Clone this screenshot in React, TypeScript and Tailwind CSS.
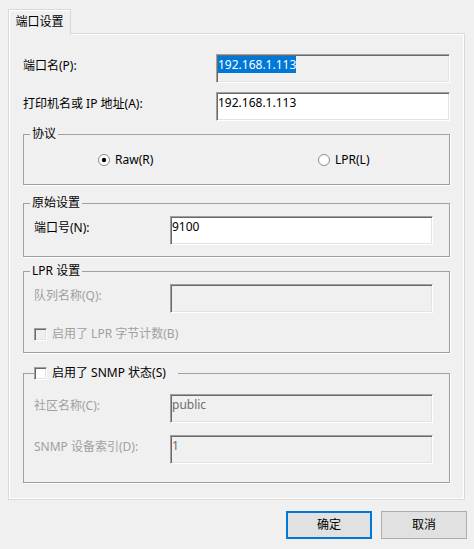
import type { ReactNode } from 'react';

const sunken =
  'border border-t-[#a0a0a0] border-l-[#a0a0a0] border-b-white border-r-white shadow-[inset_1px_1px_0_#696969,inset_-1px_-1px_0_#e3e3e3]';

function Field({ children, className = '' }: { children?: ReactNode; className?: string }) {
  return <div className={`${sunken} h-[29px] pl-[1px] pt-[2px] leading-[16px] ${className}`}>{children}</div>;
}

function Check({ disabled }: { disabled?: boolean }) {
  return <span className={`${sunken} block h-[13px] w-[13px] shrink-0 ${disabled ? 'bg-[#f0f0f0]' : 'bg-white'}`} />;
}

function Radio({ checked, label }: { checked?: boolean; label: string }) {
  return (
    <div className="flex items-center gap-[5px]">
      <svg width="12" height="12" viewBox="0 0 12 12">
        <circle cx="6" cy="6" r="5.5" fill="#fff" stroke="#8a8a8a" />
        {checked && <circle cx="6" cy="6" r="2.2" fill="#000" />}
      </svg>
      <span className="leading-[16px]">{label}</span>
    </div>
  );
}

function Group({ title, className = '', children }: { title: ReactNode; className?: string; children: ReactNode }) {
  return (
    <fieldset className={`w-[427px] border border-[#a0a0a0] shadow-[1px_1px_0_#fff] ${className}`}>
      {title}
      {children}
    </fieldset>
  );
}

function Legend({ text }: { text: string }) {
  return <legend className="ml-[6px] px-[2px] leading-[16px]">{text}</legend>;
}

export default function App() {
  return (
    <div
      className="h-[549px] w-[474px] bg-[#f0f0f0] px-[8px] pt-[9px] text-[12px] text-black"
      style={{ fontFamily: '"Noto Sans", "Noto Sans CJK SC", sans-serif' }}
    >
      <div className="relative z-10 -mb-[2px] flex h-[26px] w-[63px] items-center justify-center border border-b-0 border-[#d9d9d9] bg-[#f0f0f0] pb-[2px] shadow-[inset_1px_1px_0_#fff]">
        端口设置
      </div>

      <div className="flex h-[467px] w-[457px] flex-col border border-[#d9d9d9] px-[14px] pt-[20px] shadow-[inset_1px_1px_0_#fff,inset_-1px_-1px_0_#fff]">
        <div className="flex">
          <span className="w-[193px] pt-[4px] leading-[16px]">端口名(P):</span>
          <Field className="w-[234px] bg-[#f0f0f0]">
            <span className="bg-[#0078d7] text-white">192.168.1.113</span>
          </Field>
        </div>
        <div className="mt-[9px] flex">
          <span className="w-[193px] pt-[4px] leading-[16px]">打印机名或 IP 地址(A):</span>
          <Field className="w-[234px] bg-white">192.168.1.113</Field>
        </div>

        <Group className="mt-[5px] pb-[16px] pt-[10px]" title={<Legend text="协议" />}>
          <div className="flex pl-[74px]">
            <div className="w-[220px]">
              <Radio checked label="Raw(R)" />
            </div>
            <Radio label="LPR(L)" />
          </div>
        </Group>

        <Group className="mt-[10px] pb-[11px] pt-[5px]" title={<Legend text="原始设置" />}>
          <div className="flex pl-[10px]">
            <span className="w-[136px] pt-[4px] leading-[16px]">端口号(N):</span>
            <Field className="w-[263px] bg-white">9100</Field>
          </div>
        </Group>

        <Group className="mt-[6px] pb-[10px] pt-[5px]" title={<Legend text="LPR 设置" />}>
          <div className="flex pl-[10px] text-[#a0a0a0]">
            <span className="w-[136px] pt-[4px] leading-[16px]">队列名称(Q):</span>
            <Field className="w-[263px] bg-[#f0f0f0]" />
          </div>
          <div className="mt-[13px] flex h-[16px] items-center gap-[5px] pl-[10px] text-[#a0a0a0]">
            <Check disabled />
            <span className="leading-[16px]">启用了 LPR 字节计数(B)</span>
          </div>
        </Group>

        <Group
          className="mt-[12px] pb-[18px] pt-[13px]"
          title={
            <legend className="ml-[10px] pr-[12px] leading-[16px]">
              <span className="flex items-center gap-[5px]">
                <Check />
                <span>启用了 SNMP 状态(S)</span>
              </span>
            </legend>
          }
        >
          <div className="flex pl-[10px] text-[#a0a0a0]">
            <span className="w-[136px] pt-[4px] leading-[16px]">社区名称(C):</span>
            <Field className="w-[263px] bg-[#f0f0f0] text-[#6d6d6d]">public</Field>
          </div>
          <div className="mt-[12px] flex pl-[10px] text-[#a0a0a0]">
            <span className="w-[136px] pt-[4px] leading-[16px]">SNMP 设备索引(D):</span>
            <Field className="w-[263px] bg-[#f0f0f0] text-[#6d6d6d]">1</Field>
          </div>
        </Group>
      </div>

      <div className="mt-[11px] flex justify-end gap-[9px]">
        <button className="h-[28px] w-[86px] border-2 border-[#0078d7] bg-[#e1e1e1]">确定</button>
        <button className="-mr-[1px] h-[28px] w-[86px] border border-[#adadad] bg-[#e1e1e1]">取消</button>
      </div>
    </div>
  );
}
